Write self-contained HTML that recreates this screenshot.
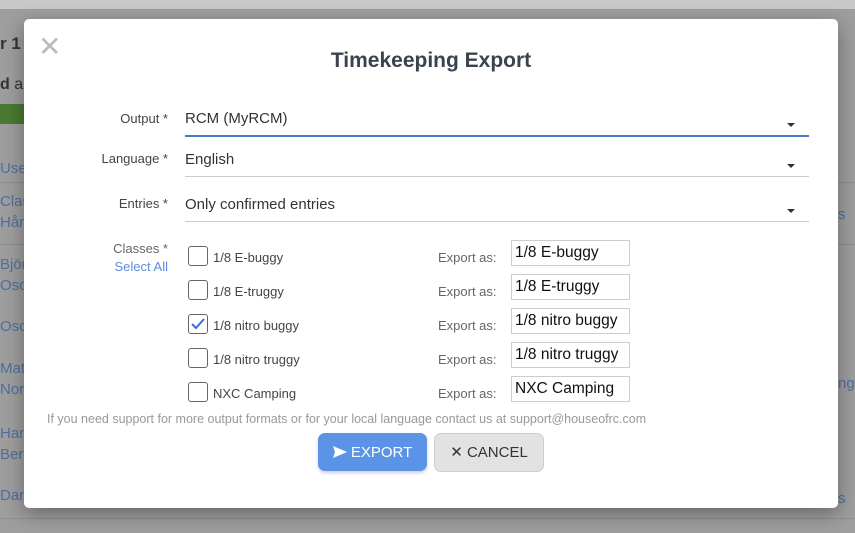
<!DOCTYPE html>
<html><head><style>
body{margin:0;width:855px;height:533px;overflow:hidden;background:#9e9e9e;font-family:"Liberation Sans",sans-serif;position:relative}
.bg{position:absolute;color:#4f6f9e;font-size:15px}
.line{position:absolute;left:0;width:855px;height:1px;background:#8f8f8f}
.dlg{position:absolute;left:24px;top:19px;width:814px;height:489px;background:#fff;border-radius:5px;box-shadow:0 6px 20px rgba(0,0,0,.35)}
.a{position:absolute}
.lbl{position:absolute;font-size:13px;color:#444;text-align:right;width:120px;left:24px}
.sel{position:absolute;left:161px;width:624px;border-bottom:1px solid #ccc;font-size:15px;color:#333;padding-top:2px;box-sizing:border-box}
.sel:after{content:"";position:absolute;right:14px;top:55%;border:4px solid transparent;border-top:4px solid #333}
.cb{position:absolute;left:164px;width:18px;height:18px;border:1px solid #666;border-radius:3px}
.cn{position:absolute;left:189px;font-size:13px;color:#444;margin-top:1px}
.ea{position:absolute;left:414px;font-size:13px;color:#666;margin-top:1px}
.in{position:absolute;left:487px;width:119px;height:26px;border:1px solid #ccc;box-sizing:border-box;font-size:15.5px;color:#111;padding:3px 3px}
</style></head><body>
<div style="position:absolute;left:0;top:0;width:855px;height:9px;background:#c8c8c8"></div>
<div class="bg" style="left:0;top:34px;font-weight:bold;color:#333;font-size:17px">r 1</div>
<div class="bg" style="left:0;top:76px;color:#333;font-size:16px"><b>d</b> a</div>
<div style="position:absolute;left:0;top:104px;width:30px;height:20px;background:#4a7a32"></div>
<div class="bg" style="left:0;top:160px">User</div>
<div class="line" style="top:182px"></div>
<div class="bg" style="left:0;top:191px;line-height:21px">Clau<br>Hån</div>
<div class="line" style="top:244px"></div>
<div class="bg" style="left:0;top:254px;line-height:21px">Björ<br>Osc</div>
<div class="bg" style="left:0;top:318px">Osc</div>
<div class="bg" style="left:0;top:358px;line-height:21px">Mat<br>Nor</div>
<div class="bg" style="left:0;top:423px;line-height:21px">Han<br>Berg</div>
<div class="bg" style="left:0;top:487px">Dan</div>
<div class="bg" style="left:838px;top:206px">s</div>
<div class="bg" style="left:838px;top:375px">ng</div>
<div class="bg" style="left:838px;top:490px">s</div>
<div class="line" style="top:518px"></div>
<div class="dlg">
<div class="a" style="left:14px;top:14px;font-size:28px;color:#bbb;line-height:1">✕</div>
<div class="a" style="left:0;width:814px;top:30px;text-align:center;font-size:21px;font-weight:bold;color:#3a4350">Timekeeping Export</div>
<div class="lbl" style="top:92px">Output *</div>
<div class="sel" style="top:89px;height:29px;border-bottom:2px solid #4a7ad0">RCM (MyRCM)</div>
<div class="lbl" style="top:132px">Language *</div>
<div class="sel" style="top:130px;height:28px">English</div>
<div class="lbl" style="top:177px">Entries *</div>
<div class="sel" style="top:175px;height:28px">Only confirmed entries</div>
<div class="lbl" style="top:222px;color:#666">Classes *</div>
<div class="lbl" style="top:240px;color:#5a8ee0">Select All</div>
<div class="cb" style="top:227px"></div><div class="cn" style="top:230px">1/8 E-buggy</div>
<div class="ea" style="top:230px">Export as:</div><div class="in" style="top:221px">1/8 E-buggy</div>
<div class="cb" style="top:261px"></div><div class="cn" style="top:264px">1/8 E-truggy</div>
<div class="ea" style="top:264px">Export as:</div><div class="in" style="top:255px">1/8 E-truggy</div>
<div class="cb" style="top:295px"><svg width="18" height="18" viewBox="0 0 18 18"><path d="M3 9l4 4 8-9" stroke="#3b6fd0" stroke-width="2" fill="none"/></svg></div><div class="cn" style="top:298px">1/8 nitro buggy</div>
<div class="ea" style="top:298px">Export as:</div><div class="in" style="top:289px">1/8 nitro buggy</div>
<div class="cb" style="top:329px"></div><div class="cn" style="top:332px">1/8 nitro truggy</div>
<div class="ea" style="top:332px">Export as:</div><div class="in" style="top:323px">1/8 nitro truggy</div>
<div class="cb" style="top:363px"></div><div class="cn" style="top:366px">NXC Camping</div>
<div class="ea" style="top:366px">Export as:</div><div class="in" style="top:357px">NXC Camping</div>
<div class="a" style="left:23px;top:393px;font-size:12.5px;color:#999">If you need support for more output formats or for your local language contact us at support@houseofrc.com</div>
<div class="a" style="left:294px;top:414px;width:109px;height:38px;background:#5b93e6;border-radius:7px;color:#fff;font-size:15px;line-height:39px;text-align:center;box-shadow:0 2px 3px rgba(120,80,160,.3)"><svg width="14" height="12" viewBox="0 0 14 12" style="vertical-align:-1px"><path d="M0 0L14 6L0 12L2 6Z" fill="#fff"/></svg> EXPORT</div>
<div class="a" style="left:410px;top:414px;width:108px;height:37px;background:#e2e2e2;border:1px solid #ccc;border-radius:7px;color:#333;font-size:15px;line-height:38px;text-align:center">✕ CANCEL</div>
</div>
</body></html>
